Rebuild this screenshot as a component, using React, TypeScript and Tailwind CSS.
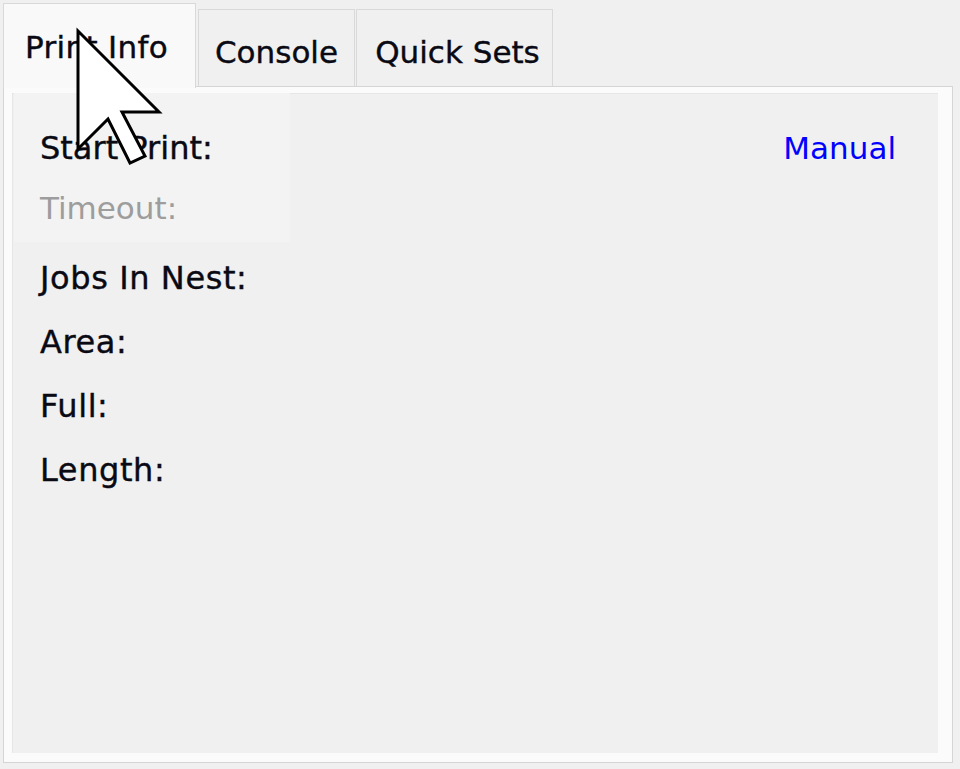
const font = { fontFamily: '"DejaVu Sans", Verdana, sans-serif' };

const labels = ['Jobs In Nest:', 'Area:', 'Full:', 'Length:'];

function Cursor() {
  return (
    <svg
      className="pointer-events-none absolute left-0 top-0 z-20"
      width="200"
      height="200"
      viewBox="0 0 200 200"
    >
      <polygon
        points="78,31 78,149 108,119 130,163 145,156 122,112 159,112"
        fill="#ffffff"
        stroke="#000000"
        strokeWidth="3"
        strokeLinejoin="miter"
      />
    </svg>
  );
}

export default function App() {
  return (
    <div
      className="relative h-[769px] w-[960px] overflow-hidden bg-[#f0f0f0] text-[31px] text-[#0a0a14] [-webkit-text-stroke:0.4px]"
      style={font}
    >
      {/* tab strip */}
      <div className="flex h-[86px] items-end gap-[2px] pl-[3px]">
        <div className="relative z-10 -mb-[2px] h-[85px] w-[193px] border border-b-0 border-[#d9d9d9] bg-[#f9f9f9] pr-[6px] pt-[25px] text-center leading-[37px] tracking-[0.3px]">
          Print Info
        </div>
        <div className="h-[77px] w-[157px] border border-b-0 border-[#d9d9d9] bg-[#f0f0f0] pt-[24px] text-center leading-[37px]">
          Console
        </div>
        <div className="-ml-px h-[77px] w-[197px] border border-b-0 border-[#d9d9d9] bg-[#f0f0f0] pl-[6px] pt-[24px] text-center leading-[37px]">
          Quick Sets
        </div>
      </div>

      {/* panel */}
      <div className="ml-[3px] w-[950px] border border-[#d5d5d5] bg-[#fbfbfb] pb-[9px] pl-[8px] pr-[14px] pt-[6px]">
        <div className="h-[660px] bg-[#f0f0f0] shadow-[inset_1px_1px_0_#e6e6e6]">
          <div className="flex items-start">
            <div className="ml-[2px] w-[276px] bg-[#f3f3f3] pb-[4px] pl-[26px] pt-[25px] text-[32px]">
              <div className="h-[60px] leading-[60px]">Start Print:</div>
              <div className="h-[60px] leading-[60px] text-[31px] text-[#9d9d9d] [-webkit-text-stroke:0px]">
                Timeout:
              </div>
            </div>
            <div className="ml-auto mr-[42px] pt-[25px] leading-[60px] text-[#0000ff] [-webkit-text-stroke:0px]">
              Manual
            </div>
          </div>
          <div className="mt-[4px] pl-[28px] text-[32px] tracking-[0.6px]">
            {labels.map((l) => (
              <div key={l} className="h-[64px] leading-[64px]">
                {l}
              </div>
            ))}
          </div>
        </div>
      </div>

      <Cursor />
    </div>
  );
}
